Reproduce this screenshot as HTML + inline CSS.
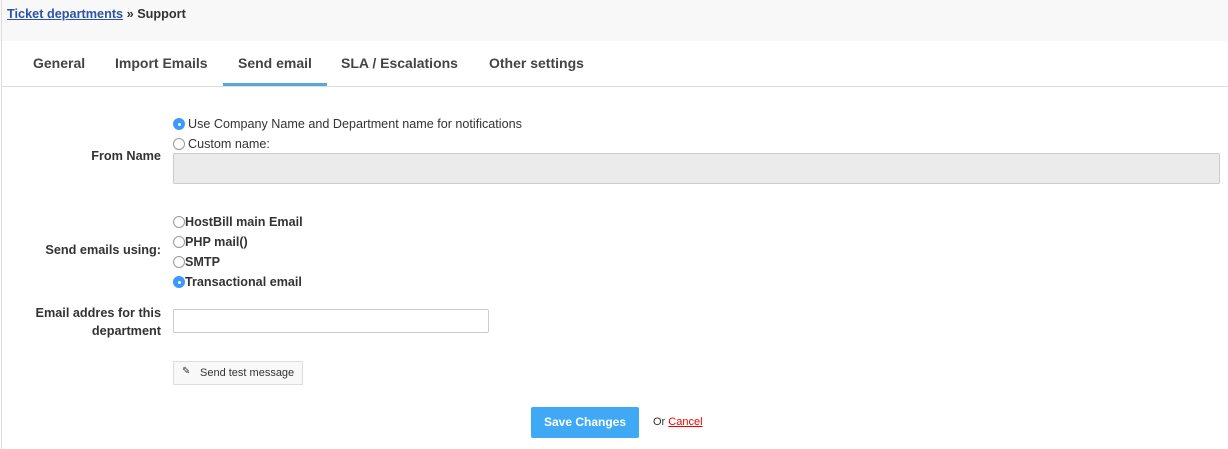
<!DOCTYPE html>
<html><head><style>
body{margin:0;width:1228px;height:449px;background:#fff;font-family:"Liberation Sans",Arial,sans-serif;color:#333;position:relative;overflow:hidden}
.a{position:absolute}
.top{left:0;top:0;width:1228px;height:41px;background:#f8f8f8}
.lb{left:1px;top:0;width:1px;height:449px;background:#ddd}
.tab{top:55px;font-size:14px;font-weight:bold;color:#444}
.lbl{font-size:12.7px;font-weight:bold;color:#333;text-align:right;width:161px;left:0}
.r{width:12px;height:12px;border:1px solid #999;border-radius:50%;box-sizing:border-box;background:#fff}
.r.on{background:#3b99fc;border-color:#3b99fc}
.r.on:after{content:"";position:absolute;left:4px;top:4px;width:3px;height:3px;border-radius:50%;background:#fff}
.t{font-size:12.6px}
</style></head><body>
<div class="a top"></div>
<div class="a lb"></div>
<div class="a" style="left:7px;top:7px;font-size:12.7px;font-weight:bold"><span style="color:#2b53a8;text-decoration:underline">Ticket departments</span> » Support</div>
<div class="a tab" style="left:33px">General</div>
<div class="a tab" style="left:115px">Import Emails</div>
<div class="a tab" style="left:238px">Send email</div>
<div class="a tab" style="left:341px">SLA / Escalations</div>
<div class="a tab" style="left:489px">Other settings</div>
<div class="a" style="left:2px;top:86px;width:1226px;height:1px;background:#ddd"></div>
<div class="a" style="left:223px;top:83px;width:104px;height:3px;background:#5aa6d6"></div>

<div class="a r on" style="left:173px;top:118px"></div>
<div class="a t" style="left:188px;top:117px">Use Company Name and Department name for notifications</div>
<div class="a r" style="left:173px;top:138px"></div>
<div class="a t" style="left:188px;top:137px">Custom name:</div>
<div class="a lbl" style="top:149px">From Name</div>
<div class="a" style="left:173px;top:153px;width:1047px;height:31px;box-sizing:border-box;background:#ebebeb;border:1px solid #ccc;border-radius:2px"></div>

<div class="a r" style="left:173px;top:216px"></div>
<div class="a t" style="left:185px;top:215px;font-weight:bold">HostBill main Email</div>
<div class="a r" style="left:173px;top:236px"></div>
<div class="a t" style="left:185px;top:235px;font-weight:bold">PHP mail()</div>
<div class="a r" style="left:173px;top:256px"></div>
<div class="a t" style="left:185px;top:255px;font-weight:bold">SMTP</div>
<div class="a r on" style="left:173px;top:276px"></div>
<div class="a t" style="left:185px;top:275px;font-weight:bold">Transactional email</div>
<div class="a lbl" style="top:243px">Send emails using:</div>

<div class="a lbl" style="top:304px;line-height:18px">Email addres for this<br>department</div>
<div class="a" style="left:173px;top:309px;width:316px;height:24px;box-sizing:border-box;border:1px solid #ccc;border-radius:2px"></div>

<div class="a" style="left:173px;top:361px;width:130px;height:24px;box-sizing:border-box;border:1px solid #ddd;background:#f8f8f8;font-size:11px;color:#333;line-height:22px;padding-left:26px">Send test message</div>
<div class="a" style="left:182px;top:366px;font-size:10px;color:#333">✎</div>

<div class="a" style="left:531px;top:407px;width:108px;height:31px;background:#3fa9f5;border-radius:2px;color:#fff;font-size:12px;font-weight:bold;text-align:center;line-height:31px">Save Changes</div>
<div class="a" style="left:653px;top:416px;font-size:11px">Or <span style="color:#e00;text-decoration:underline">Cancel</span></div>
</body></html>
